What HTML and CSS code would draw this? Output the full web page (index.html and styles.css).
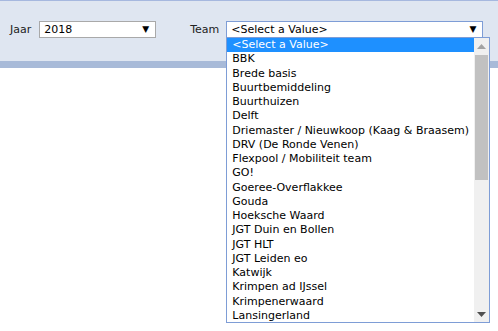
FILE: index.html
```html
<!DOCTYPE html>
<html>
<head>
<meta charset="utf-8">
<link rel="stylesheet" href="styles.css">
</head>
<body>
<div class="page">
<div class="header">
  <div class="filters">
    <span class="label label-jaar">Jaar</span>
    <div class="select select-jaar"><span class="value">2018</span><span class="arrow">▼</span></div>
    <span class="label label-team">Team</span>
    <div class="team-wrap">
      <div class="select select-team"><span class="value">&lt;Select a Value&gt;</span><span class="arrow">▼</span></div>
      <div class="dropdown">
        <ul class="options">
          <li class="selected">&lt;Select a Value&gt;</li>
          <li>BBK</li>
          <li>Brede basis</li>
          <li>Buurtbemiddeling</li>
          <li>Buurthuizen</li>
          <li>Delft</li>
          <li>Driemaster / Nieuwkoop (Kaag &amp; Braasem)</li>
          <li>DRV (De Ronde Venen)</li>
          <li>Flexpool / Mobiliteit team</li>
          <li>GO!</li>
          <li>Goeree-Overflakkee</li>
          <li>Gouda</li>
          <li>Hoeksche Waard</li>
          <li>JGT Duin en Bollen</li>
          <li>JGT HLT</li>
          <li>JGT Leiden eo</li>
          <li>Katwijk</li>
          <li>Krimpen ad IJssel</li>
          <li>Krimpenerwaard</li>
          <li>Lansingerland</li>
        </ul>
        <div class="scrollbar">
          <div class="sb-up"><svg width="9" height="5" viewBox="0 0 9 5"><path d="M4.5 0 L9 5 L0 5 Z" fill="#a3a3a3"/></svg></div>
          <div class="sb-thumb"></div>
          <div class="sb-track"></div>
          <div class="sb-down"><svg width="9" height="5" viewBox="0 0 9 5"><path d="M0 0 L9 0 L4.5 5 Z" fill="#505050"/></svg></div>
        </div>
      </div>
    </div>
  </div>
</div>
<div class="strip"></div>
</div>
</body>
</html>
```

FILE: styles.css
```css
html, body {
  margin: 0;
  padding: 0;
  background: #ffffff;
  font-family: "DejaVu Sans", Verdana, sans-serif;
  font-size: 11px;
  color: #000;
}

.page {
  min-height: 331px;
}

.header {
  background: #dfe6f1;
  border-top: 1px solid #a6b8df;
  height: 61px;
  box-sizing: border-box;
  padding-top: 20px;
}

.strip {
  height: 7px;
  background: #a8bad8;
}

.filters {
  display: flex;
  align-items: center;
  height: 17px;
  padding-left: 10px;
}

.label {
  font-size: 11px;
  color: #222;
}

.label-jaar {
  margin-right: 8px;
}

.label-team {
  margin-left: 34px;
  margin-right: 7px;
}

.select {
  box-sizing: border-box;
  height: 17px;
  background: #fff;
  border: 1px solid #a9a9a9;
  display: flex;
  align-items: center;
  justify-content: space-between;
  padding: 0 6px 0 4px;
  font-size: 11px;
}

.select-jaar {
  width: 117px;
}

.select-team {
  width: 257px;
  border-color: #7e9dd6;
}

.arrow {
  font-size: 9px;
  color: #000;
  line-height: 1;
}

.team-wrap {
  position: relative;
}

.dropdown {
  position: absolute;
  top: 16px;
  left: 0;
  width: 264px;
  height: 286px;
  box-sizing: border-box;
  border: 1px solid #7e9dd6;
  background: #fff;
  display: flex;
  z-index: 5;
  overflow: hidden;
}

.options {
  list-style: none;
  margin: 0;
  padding: 0;
  flex: 1;
  min-width: 0;
}

.options li {
  height: 14.25px;
  line-height: 14.25px;
  padding-left: 5px;
  white-space: nowrap;
  font-size: 11px;
}

.options li.selected {
  background: #1e90ff;
  color: #fff;
}

.scrollbar {
  width: 15px;
  background: #f0f0f0;
  display: flex;
  flex-direction: column;
}

.sb-up, .sb-down {
  height: 16px;
  display: flex;
  align-items: center;
  justify-content: center;
}

.sb-thumb {
  margin: 1px 1px 0;
  height: 125px;
  background: #c1c1c1;
}

.sb-track {
  flex: 1;
}
```
